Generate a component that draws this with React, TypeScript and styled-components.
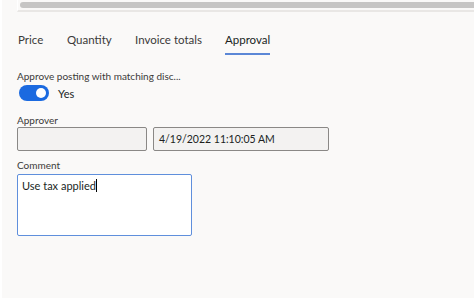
import React from "react";
import styled, { createGlobalStyle } from "styled-components";

const Global = createGlobalStyle`
  html, body { margin: 0; padding: 0; background: #ffffff; }
  body { font-family: Lato, "Open Sans", sans-serif; color: #323130; }
  * { box-sizing: border-box; }
`;

const Page = styled.div`
  width: 474px;
  height: 305px;
  background: #ffffff;
  padding: 0 0 7px 2px;
`;

const Panel = styled.div`
  height: 298px;
  background: #faf9f8;
  display: flex;
  flex-direction: column;
`;

const TopStrip = styled.div`
  margin-left: 15px;
  height: 12px;
  border-left: 1px solid #ffffff;
  border-bottom: 2px solid #e9e7e5;
  padding: 2px 0 0 2px;
`;

const ScrollThumb = styled.div`
  height: 6px;
  background: #c6c5c4;
  border-radius: 3px 0 0 3px;
`;

const Tabs = styled.div`
  display: flex;
  padding: 20px 0 0 16px;
`;

const Tab = styled.div<{ $active?: boolean; $w: number }>`
  width: ${(p) => p.$w}px;
  font-size: 11.5px;
  line-height: 16px;
  color: ${(p) => (p.$active ? "#201f1e" : "#3b3a39")};
  span {
    display: inline-block;
    padding-bottom: 5px;
    border-bottom: 2px solid ${(p) => (p.$active ? "#5b87d6" : "transparent")};
  }
`;

const Body = styled.div`
  display: flex;
  flex-direction: column;
  padding: 15px 0 0 15px;
`;

const Label = styled.div`
  font-size: 10px;
  line-height: 13px;
  color: #3b3a39;
`;

const ToggleRow = styled.div`
  display: flex;
  align-items: center;
  gap: 9px;
  padding: 1px 0 0 2px;
  height: 19px;
`;

const Toggle = styled.div`
  width: 30px;
  height: 16px;
  border-radius: 8px;
  background: #1b6ae0;
  display: flex;
  align-items: center;
  justify-content: flex-end;
  padding-right: 3px;
`;

const Knob = styled.div`
  width: 10px;
  height: 10px;
  border-radius: 50%;
  background: #ffffff;
`;

const ToggleText = styled.div`
  font-size: 11px;
  color: #201f1e;
`;

const Field = styled.div<{ $top: number }>`
  display: flex;
  flex-direction: column;
  margin-top: ${(p) => p.$top}px;
`;

const InputRow = styled.div`
  display: flex;
  gap: 6px;
`;

const Input = styled.div<{ $w: number }>`
  width: ${(p) => p.$w}px;
  height: 24px;
  background: #f3f2f1;
  border: 1px solid #8a8886;
  border-radius: 2px;
  font-size: 10.5px;
  line-height: 22px;
  padding-left: 5px;
  color: #201f1e;
`;

const TextArea = styled.div`
  width: 175px;
  height: 62px;
  margin-top: 2px;
  background: #ffffff;
  border: 1px solid #5f8fdc;
  border-radius: 2px;
  padding: 2px 4px;
  font-size: 11px;
  line-height: 18px;
  color: #201f1e;
`;

const Caret = styled.span`
  display: inline-block;
  width: 1px;
  height: 13px;
  background: #000;
  vertical-align: -2px;
`;

export default function App() {
  return (
    <>
      <Global />
      <Page>
        <Panel>
          <TopStrip>
            <ScrollThumb />
          </TopStrip>
          <Tabs>
            <Tab $w={49}><span>Price</span></Tab>
            <Tab $w={68}><span>Quantity</span></Tab>
            <Tab $w={90}><span>Invoice totals</span></Tab>
            <Tab $w={60} $active><span>Approval</span></Tab>
          </Tabs>
          <Body>
            <Label>Approve posting with matching disc...</Label>
            <ToggleRow>
              <Toggle><Knob /></Toggle>
              <ToggleText>Yes</ToggleText>
            </ToggleRow>
            <Field $top={12}>
              <Label>Approver</Label>
              <InputRow>
                <Input $w={130} />
                <Input $w={176}>4/19/2022 11:10:05 AM</Input>
              </InputRow>
            </Field>
            <Field $top={8}>
              <Label>Comment</Label>
              <TextArea>Use tax applied<Caret /></TextArea>
            </Field>
          </Body>
        </Panel>
      </Page>
    </>
  );
}
